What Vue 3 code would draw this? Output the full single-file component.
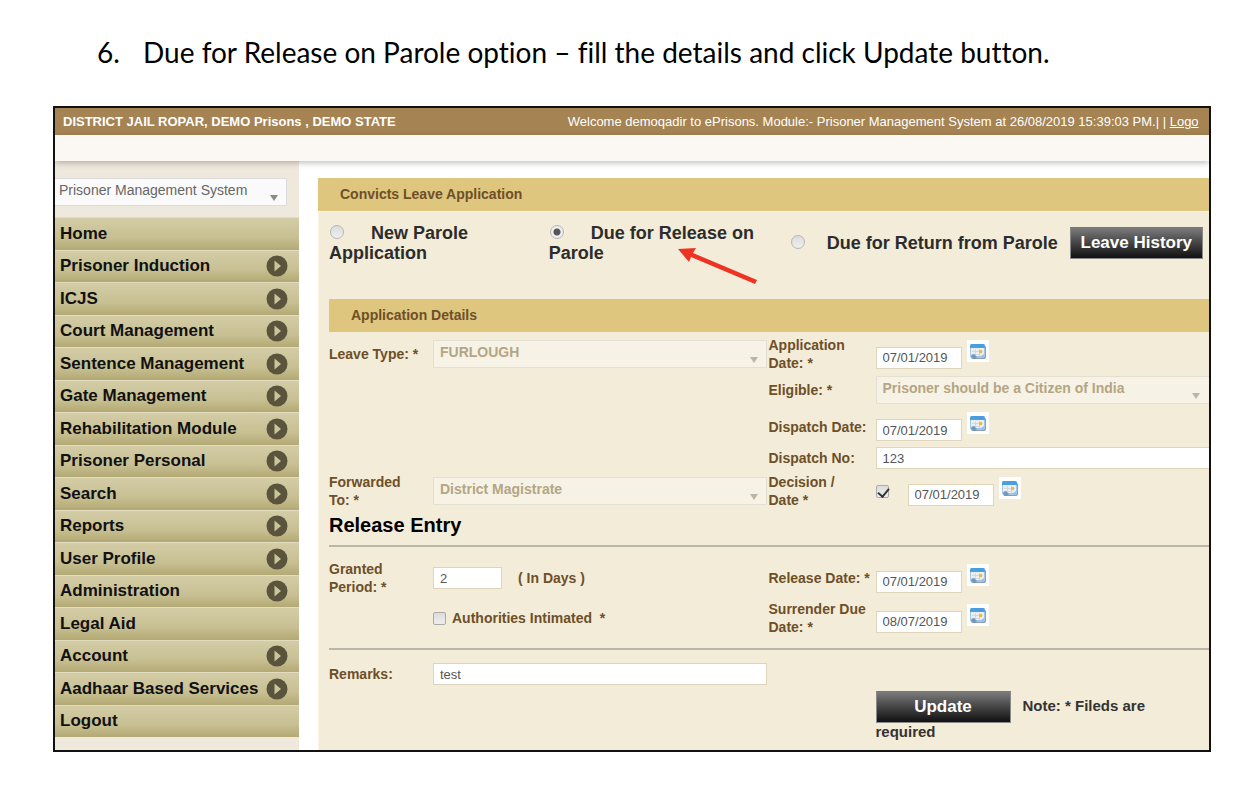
<script setup>
import { ref } from 'vue'

const menu = [
  { label: 'Home' },
  { label: 'Prisoner Induction', sub: true },
  { label: 'ICJS', sub: true },
  { label: 'Court Management', sub: true },
  { label: 'Sentence Management', sub: true },
  { label: 'Gate Management', sub: true },
  { label: 'Rehabilitation Module', sub: true },
  { label: 'Prisoner Personal', sub: true },
  { label: 'Search', sub: true },
  { label: 'Reports', sub: true },
  { label: 'User Profile', sub: true },
  { label: 'Administration', sub: true },
  { label: 'Legal Aid' },
  { label: 'Account', sub: true },
  { label: 'Aadhaar Based Services', sub: true },
  { label: 'Logout' },
]

const option = ref('release')
const applicationDate = ref('07/01/2019')
const dispatchDate = ref('07/01/2019')
const dispatchNo = ref('123')
const decided = ref(true)
const decisionDate = ref('07/01/2019')
const period = ref('2')
const intimated = ref(false)
const releaseDate = ref('07/01/2019')
const surrenderDate = ref('08/07/2019')
const remarks = ref('test')
</script>

<template>
  <svg class="defs" aria-hidden="true">
    <symbol id="calendar" viewBox="0 0 22 22">
      <path d="M5 19h12q2 0 2-2V7l-2-2v12H4z" fill="#8a9db2" />
      <rect x="3" y="4" width="15" height="14" rx="2" fill="#a4c8e8" />
      <rect x="4" y="8" width="13" height="8" fill="#eceff2" />
      <path d="M3 8V6q0-2 2-2h11q2 0 2 2v2z" fill="#4a9ede" />
      <path d="M5 11.500h11M6 14.500h8M8.500 9v7M12.500 9v7" stroke="#d3d8de" fill="none" />
      <rect x="12" y="10" width="3" height="3" fill="#f6b73c" />
      <path d="M4 17q0-3 3-3l3 3q-1 2-3 2z" fill="#7398bd" />
      <path d="M13 17l4-3v3z" fill="#8fc0e8" />
    </symbol>
    <symbol id="play" viewBox="0 0 22 22">
      <circle cx="11" cy="11" r="10.500" fill="#5a543c" />
      <path d="M8.500 5.500v11l6.500-5.500z" fill="#ccc49a" />
    </symbol>
  </svg>

  <div class="page">
    <ol class="step" start="6">
      <li><span class="num">6.</span><span>Due for Release on Parole option – fill the details and click Update button.</span></li>
    </ol>

    <div class="frame">
      <header class="top">
        <strong>DISTRICT JAIL ROPAR, DEMO Prisons , DEMO STATE</strong>
        <span>Welcome demoqadir to ePrisons. Module:- Prisoner Management System at 26/08/2019 15:39:03 PM.| | <a href="#">Logo</a></span>
      </header>
      <div class="band"></div>

      <div class="body">
        <aside class="side">
          <div class="pick module">
            <select aria-label="Module"><option>Prisoner Management System</option></select>
          </div>
          <nav class="menu">
            <a v-for="m in menu" :key="m.label" href="#">
              <span>{{ m.label }}</span>
              <svg v-if="m.sub" class="play"><use href="#play" /></svg>
            </a>
          </nav>
        </aside>

        <main class="main">
          <h1 class="bar">Convicts Leave Application</h1>
          <form class="form" @submit.prevent>
            <div class="options">
              <label class="opt"><input v-model="option" class="radio" type="radio" name="opt" value="new">New Parole Application</label>
              <label class="opt"><input v-model="option" class="radio" type="radio" name="opt" value="release">Due for Release on Parole
                <svg class="arrow" viewBox="0 0 80 36"><path d="M0 1L18 0L15 5L79 32L77 36L13 9L11 14z" fill="#ee3322" /></svg>
              </label>
              <label class="opt last"><input v-model="option" class="radio" type="radio" name="opt" value="return">Due for Return from Parole</label>
              <button class="btn" type="button">Leave History</button>
            </div>

            <h2 class="bar">Application Details</h2>

            <div class="row r1">
              <label for="leave">Leave Type: *</label>
              <div class="pick"><select id="leave" disabled><option>FURLOUGH</option></select></div>
              <label for="appdate">Application Date: *</label>
              <div class="date">
                <input id="appdate" v-model="applicationDate" class="text" type="text">
                <button class="cal" type="button" aria-label="Pick application date"><svg><use href="#calendar" /></svg></button>
              </div>
            </div>
            <div class="row r2">
              <label class="c3" for="eligible">Eligible: *</label>
              <div class="pick edge"><select id="eligible" disabled><option>Prisoner should be a Citizen of India</option></select></div>
            </div>
            <div class="row r3">
              <label class="c3" for="disdate">Dispatch Date:</label>
              <div class="date">
                <input id="disdate" v-model="dispatchDate" class="text" type="text">
                <button class="cal" type="button" aria-label="Pick dispatch date"><svg><use href="#calendar" /></svg></button>
              </div>
            </div>
            <div class="row r4">
              <label class="c3" for="disno">Dispatch No:</label>
              <input id="disno" v-model="dispatchNo" class="text wide edge" type="text">
            </div>
            <div class="row r2">
              <label for="forward">Forwarded To:&nbsp;*</label>
              <div class="pick"><select id="forward" disabled><option>District Magistrate</option></select></div>
              <label for="decision">Decision / Date&nbsp;*</label>
              <div class="date">
                <input id="decision" v-model="decided" class="check decided" type="checkbox">
                <input v-model="decisionDate" class="text" type="text" aria-label="Decision date">
                <button class="cal" type="button" aria-label="Pick decision date"><svg><use href="#calendar" /></svg></button>
              </div>
            </div>

            <h3 class="entry">Release Entry</h3>
            <hr>

            <div class="row r5">
              <label for="period">Granted Period: *</label>
              <div class="days">
                <input id="period" v-model="period" class="text" type="text">
                <span>( In Days )</span>
              </div>
              <label for="reldate">Release Date: *</label>
              <div class="date">
                <input id="reldate" v-model="releaseDate" class="text" type="text">
                <button class="cal" type="button" aria-label="Pick release date"><svg><use href="#calendar" /></svg></button>
              </div>
            </div>
            <div class="row r2">
              <label class="c2 tick"><input v-model="intimated" class="check" type="checkbox"><span>Authorities Intimated &nbsp;*</span></label>
              <label for="surdate">Surrender Due Date: *</label>
              <div class="date">
                <input id="surdate" v-model="surrenderDate" class="text" type="text">
                <button class="cal" type="button" aria-label="Pick surrender due date"><svg><use href="#calendar" /></svg></button>
              </div>
            </div>
            <hr class="second">

            <div class="row r5">
              <label for="remarks">Remarks:</label>
              <input id="remarks" v-model="remarks" class="text wide" type="text">
            </div>
            <div class="row r4">
              <div class="submit"><button class="btn update" type="submit">Update</button><span>Note: * Fileds are</span> <span>required</span></div>
            </div>
          </form>
        </main>
      </div>
    </div>
  </div>
</template>

<style>
body { margin: 0; background: #fff; }
</style>

<style scoped>
* { box-sizing: border-box; }
.defs { display: block; width: 0; height: 0; }
.page { padding: 34px 41px 56px 53px; font-family: "Liberation Sans", Arial, sans-serif; }
.step { margin: 0 0 36px 44px; padding: 0; list-style: none; font: 28px/36px Lato, Carlito, sans-serif; font-variant-ligatures: none; color: #000; }
.step li { display: flex; white-space: nowrap; }
.num { width: 46px; }
.frame { border: 2px solid #111; overflow: hidden; background: #fff; }
.top { display: flex; gap: 172px; padding: 0 0 0 8px; background: #a58353; color: #fff; font-size: 13px; line-height: 27px; white-space: nowrap; }
.top a { color: #fff; }
.band { position: relative; height: 26px; background: #fbf7f3; box-shadow: 0 2px 6px rgba(0, 0, 0, 0.25); }
.body { display: flex; }
.side { display: flex; flex-direction: column; width: 244px; padding: 17px 0 13px; background: #efe8dc; }
.menu { flex: 1; display: grid; grid-auto-rows: 1fr; margin-top: 11px; }
.menu a { display: flex; align-items: center; justify-content: space-between; padding: 0 11px 0 5px; border-top: 1px solid #e2dcc0; background: linear-gradient(#d3cca6, #c8c093 60%, #b3a974); color: #111; font-size: 17px; line-height: 20px; font-weight: bold; text-decoration: none; white-space: nowrap; }
.play { width: 22px; height: 22px; }
.pick { position: relative; }
.pick::after { content: ""; position: absolute; right: 9px; bottom: 5px; border: 4px solid transparent; border-top: 6px solid #b9b6a8; border-bottom: 0; }
.pick select { display: block; width: 100%; height: 28px; margin: 0; padding: 0 6px 5px; border: 1px solid #e3e0d2; border-radius: 0; appearance: none; background: #f6f3e6; color: #b5a583; opacity: 1; font: bold 14px/20px "Liberation Sans", Arial, sans-serif; }
.module { margin-right: 12px; }
.module::after { border-top-color: #8a8a8a; }
.pick.module select { padding: 0 4px 5px; border: 1px solid #dcdcdc; border-left: 0; background: #fafafa; color: #666; font-weight: normal; }
.main { flex: 1; min-width: 0; margin-left: 19px; padding-top: 17px; }
.bar { margin: 0; padding-left: 22px; background: #dec67f; color: #6e4f28; font-size: 14px; line-height: 33px; font-weight: bold; }
.form { padding: 11px 0 9px 10px; border-top: 1px solid #faf6e6; background: #f3ecd8; border-left: 1px solid #f7f2e4; }
.options { display: grid; grid-template-columns: 220fr 241fr 280fr auto; align-items: center; margin-bottom: 36px; padding-right: 6px; }
.opt { position: relative; color: #2c2c2c; font-size: 18px; line-height: 20px; font-weight: bold; }
.radio { appearance: none; width: 14px; height: 14px; margin: 0 27px 0 1px; border: 1px solid #b5b5b5; border-radius: 50%; background: linear-gradient(#dcdcdc, #efefef); vertical-align: 0; }
.radio:checked { background: radial-gradient(circle, #555 3px, #eee 4px); }
.last .radio { margin-right: 22px; }
.last { white-space: nowrap; }
.arrow { position: absolute; left: 129px; top: 25px; width: 80px; height: 36px; }
.btn { height: 32px; padding: 0 10px; border: 1px solid #8a8a8a; border-top-color: #777; border-radius: 0; background: linear-gradient(#7c7c7c, #444 50%, #111); color: #fff; font: bold 17px/30px "Liberation Sans", Arial, sans-serif; }
.row { display: grid; grid-template-columns: 104px 1fr 109px 1fr; align-items: center; color: #6e4f28; font-size: 14px; line-height: 18px; font-weight: bold; }
.row label:nth-of-type(2), .row .c3 { padding-left: 2px; }
.c3 { grid-column: 3; }
.c2 { grid-column: 2; }
.r1, .r2 { margin-top: 4px; }
.r3 { margin-top: 8px; }
.r4 { margin-top: 6px; }
.r5 { margin-top: 13px; }
.date { display: flex; align-items: flex-start; }
.text { width: 86px; height: 22px; margin: 0; padding: 0 6px; border: 1px solid #ded5ba; border-radius: 0; background: #fff; color: #555; font: 13px/18px "Liberation Sans", Arial, sans-serif; }
.date .text { margin-top: 7px; }
.text.wide { width: 100%; }
.edge, .edge select { border-right: 0; }
.cal { width: 22px; height: 22px; margin-left: 5px; padding: 0; border: 0; background: #fff; }
.cal svg { display: block; width: 22px; height: 22px; }
.check { appearance: none; flex: none; width: 13px; height: 13px; margin: 0; border: 1px solid #aaa; border-radius: 2px; background: linear-gradient(#dcdcdc, #eee); }
.check:checked::before { content: ""; display: block; width: 5px; height: 9px; margin: 0 0 0 3px; border: solid #333; border-width: 0 2px 2px 0; transform: rotate(40deg); }
.decided { margin: 8px 19px 0 0; }
.entry { margin: 3px 0 7px; color: #000; font-size: 20px; line-height: 26px; }
hr { height: 2px; margin: 0; border: 0; background: #b9b6ac; }
.second { margin-top: 12px; }
.days { display: flex; align-items: center; gap: 16px; }
.days .text { width: 69px; }
.tick { display: flex; align-items: center; gap: 6px; }
.submit { grid-column: 4; padding-right: 20px; color: #333; font-size: 15px; }
.update { width: 135px; margin-right: 12px; vertical-align: middle; }
</style>
